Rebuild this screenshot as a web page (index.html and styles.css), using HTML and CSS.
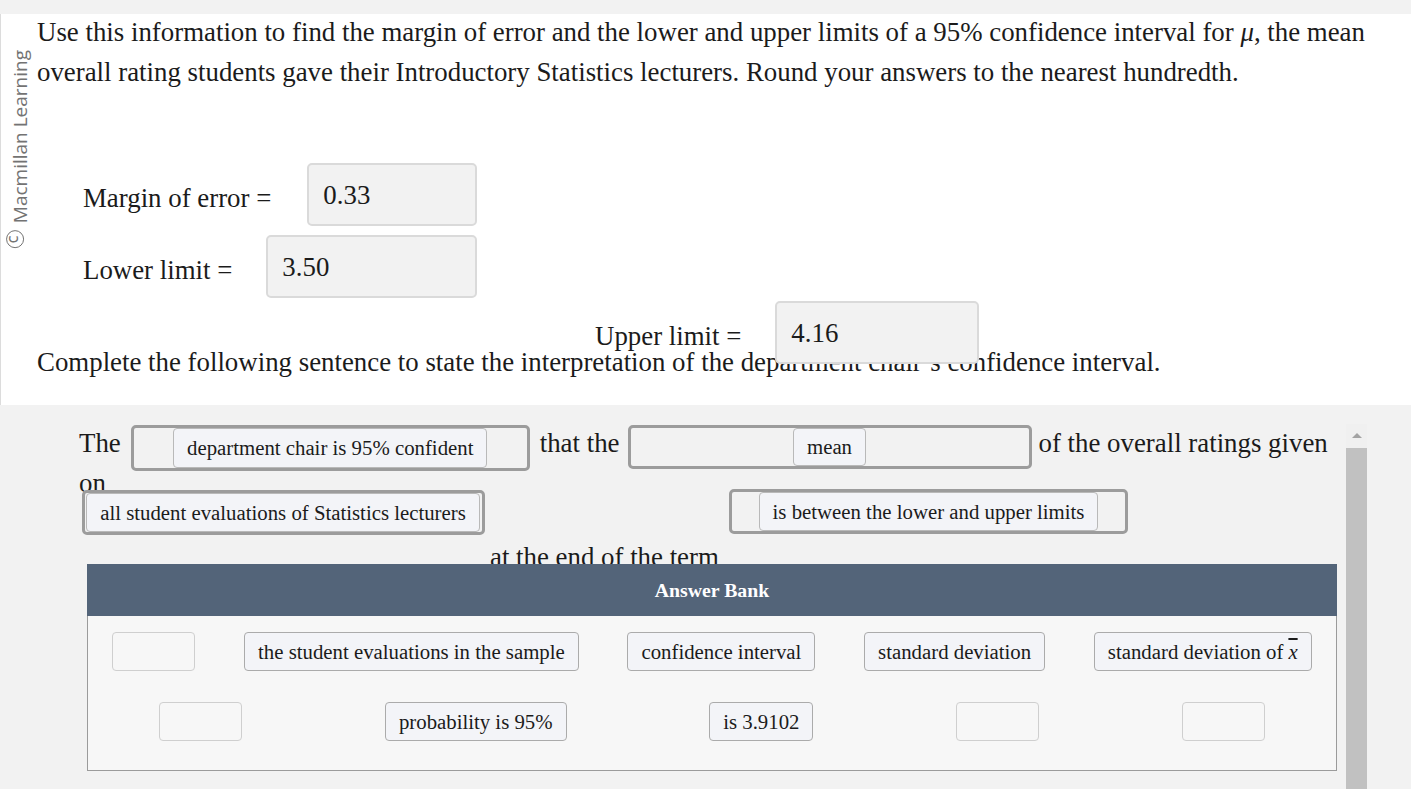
FILE: index.html
```html
<!DOCTYPE html>
<html lang="en">
<head>
<meta charset="utf-8">
<title>Confidence interval</title>
<link rel="stylesheet" href="styles.css">
</head>
<body>
<div class="topbar"></div>
<section class="upper">
  <div class="brand-col"><div class="brand"><span class="copy">C</span> Macmillan Learning</div></div>
  <div class="content">
    <p class="intro">Use this information to find the margin of error and the lower and upper limits of a 95% confidence interval for <i>μ</i>, the mean overall rating students gave their Introductory Statistics lecturers. Round your answers to the nearest hundredth.</p>
    <div class="fields">
      <div class="field f-margin"><span class="label">Margin of error =</span><div class="input w170">0.33</div></div>
      <div class="field f-lower"><span class="label">Lower limit =</span><div class="input w211">3.50</div></div>
      <div class="field f-upper"><span class="label">Upper limit =</span><div class="input w204 over">4.16</div></div>
    </div>
    <p class="complete">Complete the following sentence to state the interpretation of the department chair’s confidence interval.</p>
  </div>
</section>
<section class="lower">
  <div class="qa">
    <div class="sentence">
      <div class="srow r1">
        <span class="word w-the">The</span>
        <div class="drop d1"><span class="chip">department chair is 95% confident</span></div>
        <span class="word w-that">that the</span>
        <div class="drop d2"><span class="chip">mean</span></div>
        <span class="word w-of">of the overall ratings given</span>
      </div>
      <div class="on">on</div>
      <div class="srow r3">
        <div class="drop d3"><span class="chip">all student evaluations of Statistics lecturers</span></div>
        <div class="drop d4"><span class="chip">is between the lower and upper limits</span></div>
      </div>
      <div class="tail">at the end of the term</div>
    </div>
    <div class="bank">
      <div class="bank-head">Answer Bank</div>
      <div class="bank-body">
        <div class="bank-row">
          <span class="slot"></span>
          <span class="chip bchip">the student evaluations in the sample</span>
          <span class="chip bchip">confidence interval</span>
          <span class="chip bchip">standard deviation</span>
          <span class="chip bchip">standard deviation of <span class="xbar">x</span></span>
        </div>
        <div class="bank-row">
          <span class="slot"></span>
          <span class="chip bchip">probability is 95%</span>
          <span class="chip bchip">is 3.9102</span>
          <span class="slot"></span>
          <span class="slot"></span>
        </div>
      </div>
    </div>
  </div>
  <div class="scrollbar">
    <div class="sb-up"><span class="sb-arrow"></span></div>
    <div class="sb-thumb"></div>
  </div>
</section>
</body>
</html>
```
FILE: styles.css
```css
html, body {
  margin: 0;
  padding: 0;
  background: #f2f2f2;
  height: 789px;
  overflow: hidden;
}
body {
  font-family: "Liberation Serif", "Times New Roman", serif;
  color: #1b1b1b;
  font-size: 26.85px;
}
.topbar {
  height: 14px;
  background: #f2f2f2;
}
.upper {
  display: flex;
  background: #fff;
  border-left: 1px solid #dcdcdc;
  height: 391px;
  box-sizing: border-box;
}
.brand-col {
  width: 36px;
  flex: none;
  display: flex;
  justify-content: center;
}
.brand {
  writing-mode: vertical-rl;
  transform: rotate(180deg);
  font-family: "Open Sans", sans-serif;
  font-size: 19px;
  color: #737373;
  margin-top: 36px;
  align-self: flex-start;
  line-height: 22px;
  white-space: nowrap;
}
.copy {
  display: inline-block;
  width: 18px;
  height: 18px;
  box-sizing: border-box;
  border: 1.7px solid #737373;
  border-radius: 50%;
  font-size: 12px;
  font-weight: 600;
  line-height: 14px;
  text-align: center;
  vertical-align: middle;
  margin-bottom: 2px;
}
.content {
  flex: 1;
  padding-right: 20px;
}
.intro {
  margin: -2px 0 0;
  line-height: 40px;
}
.fields {
  margin-top: 71px;
}
.field {
  display: flex;
  align-items: center;
}
.f-margin { padding-left: 46px; gap: 36px; }
.f-lower { padding-left: 46px; gap: 34px; margin-top: 9px; }
.f-upper { padding-left: 558px; gap: 34px; margin-top: 3px; margin-bottom: -22px; }
.label {
  line-height: 40px;
  margin-top: 6px;
  white-space: nowrap;
}
.input {
  height: 63px;
  box-sizing: border-box;
  background: #f2f2f2;
  border: 2px solid #dadada;
  border-radius: 5px;
  padding: 0 14px;
  display: flex;
  align-items: center;
  line-height: 40px;
}
.over { position: relative; z-index: 1; }
.w170 { width: 170px; }
.w211 { width: 211px; }
.w204 { width: 204px; }
.complete {
  margin: 0;
  line-height: 40px;
}
.lower {
  display: flex;
  height: 384px;
  padding-left: 37px;
  overflow: hidden;
  background: #f2f2f2;
}
.qa {
  width: 1309px;
  flex: none;
}
.sentence {
  padding: 20px 0 0 42px;
}
.srow {
  display: flex;
  align-items: flex-start;
}
.word {
  line-height: 36px;
  white-space: nowrap;
}
.w-the { margin-right: 10px; }
.w-that { margin: 0 8px 0 10px; }
.w-of { margin-left: 7px; }
.drop {
  box-sizing: border-box;
  border: 3px solid #9c9c9c;
  border-radius: 5px;
  display: flex;
  justify-content: center;
  align-items: stretch;
  background: #f2f2f2;
}
.d1 { width: 399px; height: 46px; }
.d2 { width: 404px; height: 44px; }
.d3 { width: 403px; height: 45px; margin-left: 3px; padding: 0 2px 0 1px; }
.d4 { width: 399px; height: 45px; margin-left: 244px; margin-top: -1px; }
.chip {
  display: inline-flex;
  align-items: center;
  box-sizing: border-box;
  background: #f3f4f8;
  border: 1px solid #b9b9b9;
  border-radius: 4px;
  padding: 0 13px;
  font-size: 20.8px;
  white-space: nowrap;
}
.d3 .chip { flex: 1; justify-content: center; }
.on {
  line-height: 24px;
}
.r3 { margin-top: -5px; }
.tail {
  margin-left: 411px;
  line-height: 44px;
  white-space: nowrap;
}
.bank {
  margin: -15px 0 0 50px;
  width: 1250px;
  border: 1px solid #9b9b9b;
  box-sizing: border-box;
  background: #f7f7f7;
  position: relative;
}
.bank-head {
  height: 52px;
  background: #536479;
  color: #fff;
  font-weight: bold;
  font-size: 19.8px;
  display: flex;
  align-items: center;
  justify-content: center;
  margin: -1px -1px 0;
}
.bank-body {
  padding: 16px 0 29px;
  display: flex;
  flex-direction: column;
  gap: 31px;
}
.bank-row {
  display: flex;
  justify-content: space-around;
}
.bchip {
  height: 39px;
  border-color: #ababab;
}
.slot {
  width: 83px;
  height: 39px;
  box-sizing: border-box;
  border: 1px solid #cfcfcf;
  border-radius: 4px;
}
.xbar {
  font-style: italic;
  text-decoration: overline;
  margin-left: 5px;
}
.scrollbar {
  width: 21px;
  flex: none;
  display: flex;
  flex-direction: column;
  padding-top: 19px;
}
.sb-up {
  height: 24px;
  background: #f0f0f0;
  display: flex;
  justify-content: center;
  padding-top: 9px;
  box-sizing: border-box;
}
.sb-arrow {
  width: 0;
  height: 0;
  border-left: 5px solid transparent;
  border-right: 5px solid transparent;
  border-bottom: 5px solid #a3a3a3;
}
.sb-thumb {
  flex: 1;
  background: #c1c1c1;
}
```
